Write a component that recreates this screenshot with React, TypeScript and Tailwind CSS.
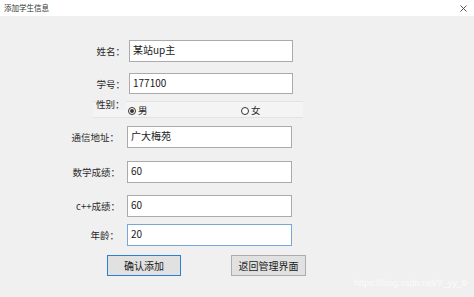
import React from "react";

const font = { fontFamily: '"Noto Sans CJK SC", "Noto Sans", sans-serif' };

function Field({
  label,
  value,
  labelW,
  gap,
  inputW,
  h,
  mt,
  focused,
}: {
  label: string;
  value: string;
  labelW: string;
  gap: string;
  inputW: string;
  h: string;
  mt: string;
  focused?: boolean;
}) {
  return (
    <div className={`flex items-center ${mt}`}>
      <div className={`${labelW} text-right text-[9.5px] leading-[12px] text-[#2a2a2a]`}>{label}</div>
      <div
        className={`${gap} ${inputW} ${h} bg-white border ${
          focused ? "border-[#79a6d9]" : "border-[#ababab]"
        } px-[3px] pt-[2px] text-[10px] leading-[14px] text-[#1a1a1a]`}
      >
        {value}
      </div>
    </div>
  );
}

export default function App() {
  return (
    <div className="w-[474px] h-[297px] flex flex-col overflow-hidden" style={font}>
      <div className="h-[16px] bg-white flex items-center justify-between">
        <span className="ml-[4px] text-[7.5px] leading-[10px] text-[#333]">添加学生信息</span>
        <svg width="7" height="7" viewBox="0 0 7 7" className="mr-[7px]">
          <path d="M0.5 0.5 L6.5 6.5 M6.5 0.5 L0.5 6.5" stroke="#444" strokeWidth="0.9" />
        </svg>
      </div>
      <div className="flex-1 bg-[#f0f0f0] relative flex flex-col">
        <Field label="姓名：" value="某站up主" labelW="w-[125px]" gap="ml-[4px]" inputW="w-[164px]" h="h-[22px]" mt="mt-[24px]" />
        <Field label="学号：" value="177100" labelW="w-[125px]" gap="ml-[4px]" inputW="w-[164px]" h="h-[21px]" mt="mt-[11px]" />

        <div className="mt-[7px] ml-[93px] w-[210px] h-[17px] relative border-t border-b border-[#e3e3e3] bg-[#f4f4f4]">
          <div className="absolute left-[3px] top-[-4px] text-[9.5px] leading-[12px] text-[#2a2a2a] bg-[#f0f0f0] pr-[1px]">性别：</div>
          <div className="absolute left-[35px] top-[3px] flex items-center">
            <span className="w-[8px] h-[8px] rounded-full border border-[#333] bg-white flex items-center justify-center">
              <span className="w-[4px] h-[4px] rounded-full bg-[#333]"></span>
            </span>
            <span className="ml-[2px] text-[9.5px] leading-[11px] text-[#2a2a2a]">男</span>
          </div>
          <div className="absolute left-[148px] top-[3px] flex items-center">
            <span className="w-[8px] h-[8px] rounded-full border border-[#333] bg-white"></span>
            <span className="ml-[2px] text-[9.5px] leading-[11px] text-[#2a2a2a]">女</span>
          </div>
        </div>

        <Field label="通信地址：" value="广大梅苑" labelW="w-[119px]" gap="ml-[8px]" inputW="w-[165px]" h="h-[22px]" mt="mt-[8px]" />
        <Field label="数学成绩：" value="60" labelW="w-[120px]" gap="ml-[7px]" inputW="w-[165px]" h="h-[22px]" mt="mt-[13px]" />
        <Field label="c++成绩：" value="60" labelW="w-[120px]" gap="ml-[7px]" inputW="w-[165px]" h="h-[22px]" mt="mt-[12px]" />
        <Field label="年龄：" value="20" labelW="w-[119px]" gap="ml-[8px]" inputW="w-[165px]" h="h-[22px]" mt="mt-[7px]" focused />

        <div className="flex mt-[9px]">
          <button className="ml-[107px] w-[74px] h-[21px] bg-[#e1e1e1] border border-[#2f7fd0] text-[10px] leading-[12px] text-[#1a1a1a] flex items-center justify-center">
            确认添加
          </button>
          <button className="ml-[50px] w-[75px] h-[21px] bg-[#e1e1e1] border border-[#adadad] text-[10px] leading-[12px] text-[#1a1a1a] flex items-center justify-center">
            返回管理界面
          </button>
        </div>

        <div
          className="absolute right-[7px] bottom-[9px] text-[9px] leading-[10px] text-[#fbfbfb]"
          style={{ fontFamily: '"Liberation Sans", sans-serif' }}
        >
          https://blog.csdn.net/Y_yy_9
        </div>
      </div>
    </div>
  );
}
